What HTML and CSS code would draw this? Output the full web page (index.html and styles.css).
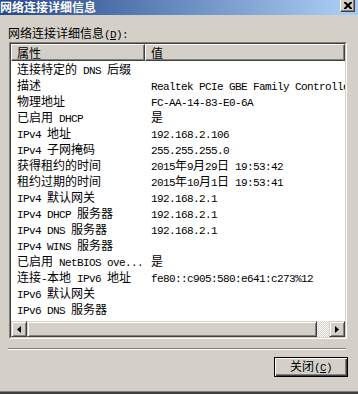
FILE: index.html
```html
<!DOCTYPE html>
<html>
<head>
<meta charset="utf-8">
<link rel="stylesheet" href="styles.css">
</head>
<body>
<div class="win">
  <div class="titlebar">
    <span class="title">网络连接详细信息</span>
    <span class="close"><svg width="8" height="7" viewBox="0 0 8 7"><path d="M0 0h2l2 2 2-2h2v1l-2.5 2.5 2.5 2.5v1h-2l-2-2-2 2h-2v-1l2.5-2.5-2.5-2.5z" fill="#000"/></svg></span>
  </div>
  <div class="label">网络连接详细信息<span class="m">(<u>D</u>):</span></div>
  <div class="listbox">
    <div class="inner">
      <div class="header">
        <div class="hc c1">属性</div>
        <div class="hc c2">值</div>
      </div>
      <div class="rows">
        <div class="row"><span class="k">连接特定的<span class="m"> DNS </span>后缀</span><span class="v"></span></div>
        <div class="row"><span class="k">描述</span><span class="v"><span class="m">Realtek PCIe GBE Family Controlle</span></span></div>
        <div class="row"><span class="k">物理地址</span><span class="v"><span class="m">FC-AA-14-83-E0-6A</span></span></div>
        <div class="row"><span class="k">已启用<span class="m"> DHCP</span></span><span class="v">是</span></div>
        <div class="row"><span class="k"><span class="m">IPv4 </span>地址</span><span class="v"><span class="m">192.168.2.106</span></span></div>
        <div class="row"><span class="k"><span class="m">IPv4 </span>子网掩码</span><span class="v"><span class="m">255.255.255.0</span></span></div>
        <div class="row"><span class="k">获得租约的时间</span><span class="v"><span class="m">2015</span>年<span class="m">9</span>月<span class="m">29</span>日<span class="m"> 19:53:42</span></span></div>
        <div class="row"><span class="k">租约过期的时间</span><span class="v"><span class="m">2015</span>年<span class="m">10</span>月<span class="m">1</span>日<span class="m"> 19:53:41</span></span></div>
        <div class="row"><span class="k"><span class="m">IPv4 </span>默认网关</span><span class="v"><span class="m">192.168.2.1</span></span></div>
        <div class="row"><span class="k"><span class="m">IPv4 DHCP </span>服务器</span><span class="v"><span class="m">192.168.2.1</span></span></div>
        <div class="row"><span class="k"><span class="m">IPv4 DNS </span>服务器</span><span class="v"><span class="m">192.168.2.1</span></span></div>
        <div class="row"><span class="k"><span class="m">IPv4 WINS </span>服务器</span><span class="v"></span></div>
        <div class="row"><span class="k">已启用<span class="m"> NetBIOS ove...</span></span><span class="v">是</span></div>
        <div class="row"><span class="k">连接<span class="m">-</span>本地<span class="m"> IPv6 </span>地址</span><span class="v"><span class="m">fe80::c905:580:e641:c273%12</span></span></div>
        <div class="row"><span class="k"><span class="m">IPv6 </span>默认网关</span><span class="v"></span></div>
        <div class="row"><span class="k"><span class="m">IPv6 DNS </span>服务器</span><span class="v"></span></div>
      </div>
      <div class="hscroll">
        <div class="sbtn"><svg width="4" height="7" viewBox="0 0 4 7"><path d="M4 0v7L0 3.5z" fill="#000"/></svg></div>
        <div class="thumb"></div>
        <div class="track"></div>
        <div class="sbtn"><svg width="4" height="7" viewBox="0 0 4 7"><path d="M0 0v7l4-3.5z" fill="#000"/></svg></div>
      </div>
    </div>
  </div>
  <div class="sep"></div>
  <div class="footer">
    <button class="btn">关闭<span class="m">(<u>C</u>)</span></button>
  </div>
  <div class="frame"></div>
</div>
</body>
</html>
```

FILE: styles.css
```css
html, body {
  margin: 0;
  padding: 0;
}
body {
  width: 358px;
  height: 394px;
  overflow: hidden;
  background: #d4d0c8;
  font-family: "Noto Sans CJK SC", sans-serif;
  font-size: 12px;
  color: #000;
}
.win {
  display: flex;
  flex-direction: column;
  height: 394px;
}
.m {
  font-family: "Liberation Mono", "Noto Sans CJK SC", monospace;
  font-size: 11px;
  letter-spacing: -0.6px;
}
.titlebar {
  height: 15px;
  display: flex;
  justify-content: space-between;
  align-items: flex-start;
  background: linear-gradient(90deg, #24468a 0%, #a6caf0 95%);
}
.title {
  color: #fff;
  font-weight: bold;
  font-size: 12px;
  line-height: 14px;
}
.close {
  width: 13px;
  height: 11px;
  margin-right: 3px;
  background: #d4d0c8;
  border-left: 1px solid #fff;
  border-right: 1px solid #404040;
  border-bottom: 1px solid #404040;
  box-shadow: inset -1px -1px #808080;
  display: flex;
  align-items: center;
  justify-content: center;
}
.label {
  margin: 10px 0 0 8px;
  line-height: 16px;
  height: 16px;
}
.label u, .btn u {
  text-decoration: underline;
}
.listbox {
  margin: 1px 0 0 9px;
  width: 338px;
  box-sizing: border-box;
  border: 1px solid;
  border-color: #808080 #fff #fff #808080;
}
.inner {
  border: 1px solid;
  border-color: #404040 #d4d0c8 #d4d0c8 #404040;
  background: #fff;
}
.header {
  display: flex;
  height: 17px;
  background: #d4d0c8;
}
.hc {
  box-sizing: border-box;
  height: 17px;
  line-height: 15px;
  border-top: 1px solid #fff;
  border-left: 1px solid #fff;
  border-right: 1px solid #404040;
  border-bottom: 1px solid #404040;
  box-shadow: inset -1px -1px #808080;
}
.c1 {
  width: 134px;
  padding-left: 5px;
}
.c2 {
  flex: 1;
  padding-left: 5px;
}
.rows {
  height: 260px;
  overflow: hidden;
}
.row {
  display: flex;
  height: 16px;
  line-height: 16px;
  white-space: nowrap;
}
.k {
  width: 134px;
  padding-left: 6px;
  box-sizing: border-box;
  overflow: hidden;
  flex: none;
}
.v {
  padding-left: 6px;
  overflow: hidden;
  flex: 1;
}
.hscroll {
  display: flex;
  height: 16px;
}
.sbtn, .thumb {
  box-sizing: border-box;
  height: 16px;
  background: #d4d0c8;
  border-top: 1px solid #d4d0c8;
  border-left: 1px solid #d4d0c8;
  border-right: 1px solid #404040;
  border-bottom: 1px solid #404040;
  box-shadow: inset 1px 1px #fff, inset -1px -1px #808080;
}
.sbtn {
  width: 16px;
  display: flex;
  align-items: center;
  justify-content: center;
}
.thumb {
  width: 290px;
}
.track {
  flex: 1;
  background-color: #fff;
  background-image: repeating-conic-gradient(#d4d0c8 0 25%, #fff 0 50%);
  background-size: 2px 2px;
}
.sep {
  margin: 9px 0 0 8px;
  width: 338px;
  height: 0;
  border-top: 1px solid #808080;
  border-bottom: 1px solid #fff;
}
.footer {
  display: flex;
  padding-left: 274px;
  margin-top: 7px;
}
.btn {
  width: 74px;
  height: 20px;
  box-sizing: border-box;
  padding: 0;
  background: #d4d0c8;
  border: 1px solid #000;
  box-shadow: inset 1px 1px #fff, inset -1px -1px #404040, inset -2px -2px #808080;
  font-family: "Noto Sans CJK SC", sans-serif;
  font-size: 12px;
  line-height: 16px;
  color: #000;
}
.frame {
  margin-top: auto;
  height: 3px;
  background: #404040;
  border-top: 1px solid #808080;
  box-sizing: border-box;
}
```
